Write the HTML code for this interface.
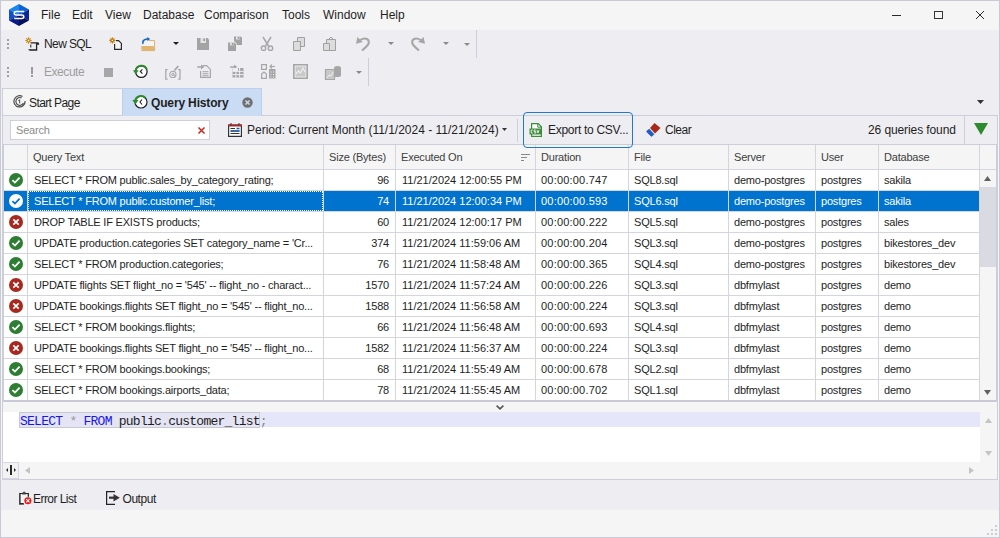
<!DOCTYPE html>
<html><head><meta charset="utf-8">
<style>
*{margin:0;padding:0;box-sizing:border-box}
html,body{width:1000px;height:538px;overflow:hidden;background:#f5f5f5}
body{position:relative;font-family:"Liberation Sans",sans-serif;font-size:12px;color:#1e1e1e}
.a{position:absolute}
.t{position:absolute;white-space:nowrap;line-height:14px}
svg{position:absolute;overflow:visible}
.g{font-size:11px;letter-spacing:-0.2px}
</style></head><body>
<!-- window border -->
<div class="a" style="left:0;top:0;width:1000px;height:538px;border:1px solid #c9cad6"></div>

<!-- MENU BAR -->
<div class="a" style="left:1px;top:1px;width:998px;height:29px;background:#f5f5f5"></div>
<svg style="left:9px;top:4px" width="20" height="22" viewBox="0 0 20 22">
  <path d="M10 0L20 5.5L10 11Z" fill="#0a64d6"/>
  <path d="M10 0L0 5.5L10 11Z" fill="#1a86ee"/>
  <path d="M0 5.5V16.5L10 11Z" fill="#1450c6"/>
  <path d="M20 5.5V16.5L10 11Z" fill="#0b2596"/>
  <path d="M0 16.5L10 22L10 11Z" fill="#0a1c86"/>
  <path d="M20 16.5L10 22L10 11Z" fill="#060f5c"/>
  <path d="M15.2 7.6H7.2Q5.2 7.6 5.2 9.3Q5.2 11 7.2 11H12.8Q14.8 11 14.8 12.7Q14.8 14.4 12.8 14.4H5.2" fill="none" stroke="#fff" stroke-width="1.5"/>
</svg>
<div class="t" style="left:41px;top:8px">File</div>
<div class="t" style="left:72px;top:8px">Edit</div>
<div class="t" style="left:105px;top:8px">View</div>
<div class="t" style="left:143px;top:8px">Database</div>
<div class="t" style="left:204px;top:8px">Comparison</div>
<div class="t" style="left:282px;top:8px">Tools</div>
<div class="t" style="left:323px;top:8px">Window</div>
<div class="t" style="left:380px;top:8px">Help</div>
<!-- window controls -->
<div class="a" style="left:892px;top:15px;width:9px;height:1px;background:#2a2a2a"></div>
<div class="a" style="left:934px;top:11px;width:9px;height:8px;border:1px solid #333"></div>
<svg style="left:976px;top:11px" width="8" height="8" viewBox="0 0 8 8"><path d="M0 0L8 8M8 0L0 8" stroke="#2a2a2a" stroke-width="1"/></svg>

<!-- TOOLBARS -->
<div class="a" style="left:1px;top:30px;width:998px;height:58px;background:#eeeef2"></div>

<!-- grips -->
<div class="a" style="left:7px;top:39px;width:2px;height:2px;background:#a0a0a8"></div>
<div class="a" style="left:7px;top:43px;width:2px;height:2px;background:#a0a0a8"></div>
<div class="a" style="left:7px;top:47px;width:2px;height:2px;background:#a0a0a8"></div>
<div class="a" style="left:7px;top:67px;width:2px;height:2px;background:#a0a0a8"></div>
<div class="a" style="left:7px;top:71px;width:2px;height:2px;background:#a0a0a8"></div>
<div class="a" style="left:7px;top:75px;width:2px;height:2px;background:#a0a0a8"></div>
<!-- New SQL icon -->
<svg style="left:25px;top:37px" width="15" height="15" viewBox="0 0 15 15">
  <g stroke="#d08a16" stroke-width="1.2"><path d="M3.5 0.3V6.7M0.3 3.5H6.7M1.3 1.3L5.7 5.7M5.7 1.3L1.3 5.7"/></g>
  <circle cx="3.5" cy="3.5" r="1.6" fill="#d08a16"/><circle cx="3.5" cy="3.5" r="0.7" fill="#fff"/>
  <path d="M5.8 5.9H12.5Q13.6 5.9 13.6 7.2H11.6V13H5" fill="none" stroke="#222" stroke-width="1.3"/>
  <path d="M5.5 12.9H4.6Q4 12.9 4 12.2" fill="none" stroke="#222" stroke-width="1.2"/>
  <path d="M5.8 7.5V10.5" stroke="#222" stroke-width="1"/>
</svg>
<div class="t" style="left:44px;top:37px;letter-spacing:-0.6px">New SQL</div>
<svg style="left:109px;top:37px" width="14" height="14" viewBox="0 0 14 14">
  <g stroke="#c97a10" stroke-width="1.1"><path d="M3.4 0.3V6.5M0.3 3.4H6.5M1.3 1.3L5.5 5.5M5.5 1.3L1.3 5.5"/></g>
  <circle cx="3.4" cy="3.4" r="1.6" fill="#c97a10"/><circle cx="3.4" cy="3.4" r="0.7" fill="#fff"/>
  <path d="M7 3.6H9.6L12.4 6.4V12.4H5.6V7" fill="#f4f4f4" stroke="#2a2a2a" stroke-width="1.2"/>
</svg>
<!-- open folder -->
<svg style="left:141px;top:37px" width="15" height="15" viewBox="0 0 15 15">
  <path d="M7.5 3.6H13.6V13.6H0.8V9.5" fill="#f4f4f4" stroke="#dcb070" stroke-width="1"/>
  <path d="M0.5 9H12.5L14 13.8H1.8Z" fill="#e0b570"/>
  <path d="M2.2 6.8Q1 4.8 3 3.2Q4.5 2 7 2" fill="none" stroke="#1565c0" stroke-width="1.5"/>
  <path d="M6.3 0L9.2 2L6.3 4Z" fill="#1565c0"/>
</svg>
<svg style="left:173px;top:42px" width="6" height="3" viewBox="0 0 6 3"><path d="M0 0H6L3 3Z" fill="#1e1e1e"/></svg>
<!-- save -->
<svg style="left:197px;top:38px" width="12" height="12" viewBox="0 0 12 12">
  <path d="M0 0H10.5L12 1.5V12H0Z" fill="#a3a3a3"/>
  <path d="M3.5 0H9V5H3.5Z" fill="#e4e4e4"/><path d="M6.3 0.5H8V3H6.3Z" fill="#9a9a9a"/>
</svg>
<svg style="left:228px;top:36px" width="14" height="15" viewBox="0 0 14 15">
  <path d="M6 0.5H12.7L14 1.8V9H6Z" fill="#a3a3a3"/><path d="M8 0.5H11.5V3.5H8Z" fill="#e4e4e4"/><path d="M9.8 1H11V3H9.8Z" fill="#9a9a9a"/>
  <path d="M-0.2 5.6H6.8L8.6 7.4V15H-0.2Z" fill="#eeeef2"/>
  <path d="M0 6.4H6.5L8 7.9V15H0Z" fill="#a3a3a3"/><path d="M2 6.4H5.5V9.4H2Z" fill="#e4e4e4"/><path d="M3.8 6.9H5V8.9H3.8Z" fill="#9a9a9a"/>
</svg>
<!-- cut -->
<svg style="left:260px;top:37px" width="14" height="14" viewBox="0 0 14 14">
  <path d="M3 0L8.5 9M11 0L5.5 9" stroke="#a6a6a6" stroke-width="1.5"/>
  <circle cx="3.5" cy="11.2" r="2.2" fill="none" stroke="#a6a6a6" stroke-width="1.4"/>
  <circle cx="10.5" cy="11.2" r="2.2" fill="none" stroke="#a6a6a6" stroke-width="1.4"/>
</svg>
<!-- copy -->
<svg style="left:293px;top:37px" width="13" height="14" viewBox="0 0 13 14">
  <path d="M4.5 4.5V0.5H11.5V9.5H7.5" fill="#dcdcdc" stroke="#a0a0a0" stroke-width="1"/>
  <path d="M0.5 4.5H7.5V13.5H0.5Z" fill="#dcdcdc" stroke="#a0a0a0" stroke-width="1"/>
</svg>
<!-- paste -->
<svg style="left:323px;top:36px" width="14" height="15" viewBox="0 0 14 15">
  <path d="M3.5 7.5V3.5H12.5V14.5H6.5" fill="#dcdcdc" stroke="#a0a0a0" stroke-width="1"/>
  <path d="M5.5 3.5L8 1L10.5 3.5Z" fill="none" stroke="#a0a0a0" stroke-width="1"/>
  <path d="M0.5 7.5H6.5V14.5H0.5Z" fill="#dcdcdc" stroke="#a0a0a0" stroke-width="1"/>
</svg>
<!-- undo -->
<svg style="left:356px;top:37px" width="14" height="14" viewBox="0 0 14 14">
  <path d="M4.2 3Q8 0.8 11 2Q13.2 3.2 12.8 6Q12.5 8 6 13.6" fill="none" stroke="#a6a6a6" stroke-width="2"/>
  <path d="M0 6.8L1.4 0L6.8 5Z" fill="#a6a6a6"/>
</svg>
<svg style="left:388px;top:42px" width="6" height="3" viewBox="0 0 6 3"><path d="M0 0H6L3 3Z" fill="#8a8a8a"/></svg>
<!-- redo -->
<svg style="left:411px;top:37px" width="14" height="14" viewBox="0 0 14 14">
  <path d="M9.8 3Q6 0.8 3 2Q0.8 3.2 1.2 6Q1.5 8 8 13.6" fill="none" stroke="#a6a6a6" stroke-width="2"/>
  <path d="M14 6.8L12.6 0L7.2 5Z" fill="#a6a6a6"/>
</svg>
<svg style="left:443px;top:42px" width="6" height="3" viewBox="0 0 6 3"><path d="M0 0H6L3 3Z" fill="#8a8a8a"/></svg>
<svg style="left:464px;top:43px" width="6" height="3" viewBox="0 0 6 3"><path d="M0 0H6L3 3Z" fill="#8a8a8a"/></svg>
<div class="a" style="left:476px;top:30px;width:1px;height:28px;background:#cccedb"></div>

<!-- toolbar 2 -->
<div class="a" style="left:31px;top:67px;width:2px;height:7px;background:#9a9a9a"></div>
<div class="a" style="left:31px;top:75px;width:2px;height:2px;background:#9a9a9a"></div>
<div class="t" style="left:44px;top:65px;color:#9d9d9d;letter-spacing:-0.45px">Execute</div>
<div class="a" style="left:104px;top:68px;width:9px;height:9px;background:#a6a6a6"></div>
<!-- history -->
<svg style="left:133px;top:64px" width="16" height="16" viewBox="0 0 16 16">
  <circle cx="8.3" cy="7.6" r="5.8" fill="#fff" stroke="#1e1e1e" stroke-width="1.2"/>
  <path d="M9.4 5.3L7.3 7.5L9.4 9.7" fill="none" stroke="#1e1e1e" stroke-width="1.1"/>
  <path d="M2.6 7A5.8 5.8 0 0 1 13.8 5.5" fill="none" stroke="#2e8a2e" stroke-width="2"/>
  <path d="M0 6.2H5.6L2.8 10.4Z" fill="#2e8a2e"/>
</svg>
<!-- email/at -->
<svg style="left:165px;top:65px" width="16" height="15" viewBox="0 0 16 15">
  <path d="M2.6 4.6H0.8V14.2H2.6M13.2 4.6H15V14.2H13.2" fill="none" stroke="#a6a6a6" stroke-width="1.2"/>
  <circle cx="7.9" cy="9.4" r="3.1" fill="none" stroke="#a6a6a6" stroke-width="1.1"/>
  <circle cx="7.9" cy="9.4" r="1.2" fill="none" stroke="#a6a6a6" stroke-width="1"/>
  <path d="M9.1 9.4V10.6Q9.1 11.5 10 11.5" fill="none" stroke="#a6a6a6" stroke-width="1"/>
  <path d="M9.5 5.5L13.3 1" stroke="#a6a6a6" stroke-width="1.7"/>
</svg>
<svg style="left:197px;top:64px" width="14" height="14" viewBox="0 0 14 14">
  <path d="M0.2 3H5" stroke="#a6a6a6" stroke-width="1.5"/><path d="M4 0.5L7.2 3L4 5.5Z" fill="#a6a6a6"/>
  <path d="M5.5 1.6H9.6L13.4 5.4V13.4H3.6V7" fill="none" stroke="#a6a6a6" stroke-width="1.2"/>
  <path d="M5.5 7.7H11.5M5.5 9.7H11.5M5.5 11.7H11.5" stroke="#a6a6a6" stroke-width="1"/>
</svg>
<svg style="left:230px;top:64px" width="14" height="14" viewBox="0 0 14 14">
  <path d="M0.2 3H5" stroke="#a6a6a6" stroke-width="1.5"/><path d="M4 0.5L7.2 3L4 5.5Z" fill="#a6a6a6"/>
  <path d="M2.5 4H13.5V13.5H2.5Z" fill="#a6a6a6"/>
  <path d="M2.5 4H8V7H2.5Z" fill="#eeeef2"/>
  <path d="M5.9 7V13.5M9.6 4V13.5M2.5 7.4H13.5M2.5 10.6H13.5" stroke="#eeeef2" stroke-width="1"/>
</svg>
<svg style="left:261px;top:64px" width="15" height="15" viewBox="0 0 15 15">
  <path d="M0.6 0.6H5.4V5.4H0.6Z" fill="none" stroke="#a6a6a6" stroke-width="1.2"/>
  <path d="M0.6 14.4H5.4V10L3 8L0.6 10Z" fill="none" stroke="#a6a6a6" stroke-width="1.2"/>
  <path d="M8 5H14.5V14.5H8Z" fill="#a6a6a6"/>
  <path d="M9.5 8H10.5M12 8H13M9.5 10.5H10.5M12 10.5H13M9.5 13H10.5M12 13H13" stroke="#eeeef2" stroke-width="1"/>
  <path d="M9 2.5H14M11 0.5L9 2.5L11 4.5" fill="none" stroke="#a6a6a6" stroke-width="1.1"/>
</svg>
<svg style="left:293px;top:64px" width="15" height="15" viewBox="0 0 15 15">
  <path d="M0.8 0.8H14.2V14.2H0.8Z" fill="none" stroke="#a6a6a6" stroke-width="1.6"/>
  <path d="M2.5 2.5H12.5V12.5H2.5Z" fill="#c8c8c8"/>
  <path d="M3 10L5.5 7L7.5 9L10 4L12 8" fill="none" stroke="#eeeef2" stroke-width="1.2"/>
</svg>
<svg style="left:325px;top:66px" width="16" height="14" viewBox="0 0 16 14">
  <path d="M9 2Q9 0 12.5 0Q16 0 16 2V9Q16 11 12.5 11Q9 11 9 9Z" fill="#a6a6a6"/>
  <path d="M0.5 3.5H9.5V13.5H0.5Z" fill="#c8c8c8" stroke="#a6a6a6" stroke-width="1.2"/>
  <path d="M2 12L4 9L6 10L8 6" fill="none" stroke="#eeeef2" stroke-width="1"/>
</svg>
<svg style="left:356px;top:71px" width="6" height="3" viewBox="0 0 6 3"><path d="M0 0H6L3 3Z" fill="#8a8a8a"/></svg>
<div class="a" style="left:368px;top:58px;width:1px;height:28px;background:#cccedb"></div>


<!-- TABS ROW -->
<div class="a" style="left:1px;top:88px;width:998px;height:27px;background:#eeeef2"></div>
<div class="a" style="left:2px;top:88px;width:121px;height:28px;background:#f5f5f5;border:1px solid #cccedb;border-bottom:none"></div>
<svg style="left:13px;top:95px" width="13" height="13" viewBox="0 0 13 13">
  <path d="M9.5 1.6A5.6 5.6 0 1 0 12.1 6" fill="none" stroke="#4a4a4a" stroke-width="1.2"/>
  <path d="M10.4 8A3.9 3.9 0 1 1 8.6 3" fill="none" stroke="#4a4a4a" stroke-width="1.1"/>
  <path d="M5.4 5.6L6.7 4.8V8.4" fill="none" stroke="#4a4a4a" stroke-width="1"/>
</svg>
<div class="t" style="left:29px;top:96px;color:#1e1e1e;letter-spacing:-0.6px">Start Page</div>
<div class="a" style="left:122px;top:88px;width:140px;height:28px;background:#c9dcf3;border:1px solid #bcd0ec;border-bottom:none"></div>
<svg style="left:132px;top:94px" width="16" height="16" viewBox="0 0 16 16">
  <circle cx="9" cy="8" r="6" fill="#fff" stroke="#1e1e1e" stroke-width="1.2"/>
  <path d="M10 5.5L8 8L10 10.5" fill="none" stroke="#1e1e1e" stroke-width="1.1"/>
  <path d="M3.1 7A6 6 0 0 1 13.5 4" fill="none" stroke="#2e8a2e" stroke-width="2"/>
  <path d="M0.3 6H6.5L3.4 10.5Z" fill="#2e8a2e"/>
</svg>
<div class="t" style="left:151px;top:96px;font-weight:bold;color:#1e1e1e;letter-spacing:-0.15px">Query History</div>
<svg style="left:242px;top:97px" width="11" height="11" viewBox="0 0 11 11">
  <circle cx="5.5" cy="5.5" r="5.2" fill="#707070"/>
  <path d="M3.5 3.5L7.5 7.5M7.5 3.5L3.5 7.5" stroke="#c9dcf3" stroke-width="1.4"/>
</svg>
<svg style="left:977px;top:100px" width="7" height="4" viewBox="0 0 7 4"><path d="M0 0H7L3.5 4Z" fill="#333"/></svg>

<!-- CONTENT PANEL -->
<div class="a" style="left:2px;top:115px;width:996px;height:365px;background:#eeeef2;border:1px solid #cccedb"></div>
<div class="a" style="left:123px;top:115px;width:138px;height:1px;background:#c9dcf3"></div>
<!-- filter bar -->
<div class="a" style="left:10px;top:120px;width:200px;height:20px;background:#fff;border:1px solid #cfd0da"></div>
<div class="t" style="left:16px;top:123px;color:#8b8b8b;font-size:11px;letter-spacing:-0.2px">Search</div>
<svg style="left:198px;top:127px" width="7" height="7" viewBox="0 0 7 7"><path d="M0.5 0.5L6.5 6.5M6.5 0.5L0.5 6.5" stroke="#c42b1c" stroke-width="1.5"/></svg>
<svg style="left:228px;top:123px" width="14" height="14" viewBox="0 0 14 14">
  <path d="M0.6 2.1H13.4V13.4H0.6Z" fill="#fff" stroke="#333" stroke-width="1.2"/>
  <path d="M0 1.5H14V3.5H0Z" fill="#a52a2a"/>
  <path d="M3 0V2M11 0V2" stroke="#333" stroke-width="1"/>
  <path d="M2.5 5.5H7M2.5 8H11.5M2.5 10.5H11.5" stroke="#333" stroke-width="1.2"/>
  <path d="M8.5 5.5H11.5M2.5 8H11.5" stroke="#1c5cb0" stroke-width="1.4"/>
</svg>
<div class="t" style="left:247px;top:123px;color:#1e1e1e">Period: Current Month (11/1/2024 - 11/21/2024)</div>
<svg style="left:502px;top:128px" width="5" height="3" viewBox="0 0 5 3"><path d="M0 0H5L2.5 3Z" fill="#333"/></svg>
<div class="a" style="left:517px;top:119px;width:1px;height:23px;background:#cccedb"></div>
<div class="a" style="left:523px;top:112px;width:110px;height:36px;border:1px solid #1f78d1;border-radius:4px;z-index:5"></div>
<svg style="left:529px;top:123px" width="14" height="14" viewBox="0 0 14 14">
  <path d="M2.6 0.6H9.2L12.4 3.8V13.4H2.6Z" fill="#fff" stroke="#3c8c3c" stroke-width="1.2"/>
  <path d="M8.8 0.6V4.2H12.4" fill="none" stroke="#3c8c3c" stroke-width="1"/>
  <path d="M0.5 5.5H13V11.5H0.5Z" fill="#3c8c3c"/>
  <path d="M3.8 7H2.2V10H3.8M6.8 7H5V8.5H6.8V10H5M8 7L9 10L10 7" fill="none" stroke="#fff" stroke-width="0.8"/>
</svg>
<div class="t" style="left:548px;top:123px;color:#1e1e1e;letter-spacing:-0.29px">Export to CSV...</div>
<svg style="left:646px;top:123px" width="15" height="14" viewBox="0 0 15 14">
  <path d="M8.5 0L14.5 5L9 10.5L4 5Z" fill="#a8281a"/>
  <path d="M3.3 5.8L8.3 11.2L6.2 13.3Q5.5 14 4.8 13.3L0.7 9.2Q0 8.5 0.7 7.8Z" fill="#1f5fc0"/>
</svg>
<div class="t" style="left:665px;top:123px;color:#1e1e1e;letter-spacing:-0.5px">Clear</div>
<div class="t" style="left:868px;top:123px;color:#1e1e1e;letter-spacing:-0.1px">26 queries found</div>
<div class="a" style="left:964px;top:116px;width:1px;height:28px;background:#cccedb"></div>
<svg style="left:974px;top:123px" width="14" height="12" viewBox="0 0 14 12"><path d="M0 0H14L7 12Z" fill="#2d8a2d"/></svg>

<!-- GRID -->
<div class="a" style="left:3px;top:144px;width:994px;height:258px;background:#fff;border:1px solid #cccedb;border-bottom:2px solid #c8cad6"></div>
<div class="a" style="left:4px;top:145px;width:992px;height:25px;background:#f5f5f5;border-bottom:1px solid #d4d5df"></div>
<div class="t g" style="left:33px;top:150px;color:#404040">Query Text</div>
<div class="t g" style="left:329px;top:150px;color:#404040">Size (Bytes)</div>
<div class="t g" style="left:401px;top:150px;color:#404040">Executed On</div>
<div class="t g" style="left:541px;top:150px;color:#404040">Duration</div>
<div class="t g" style="left:634px;top:150px;color:#404040">File</div>
<div class="t g" style="left:734px;top:150px;color:#404040">Server</div>
<div class="t g" style="left:821px;top:150px;color:#404040">User</div>
<div class="t g" style="left:884px;top:150px;color:#404040">Database</div>
<svg style="left:521px;top:154px" width="9" height="7" viewBox="0 0 9 7"><path d="M0 0.5H9M0 3.5H6M0 6.5H3" stroke="#888" stroke-width="1"/></svg>
<div class="a" style="left:4px;top:190px;width:975px;height:1px;background:#d4d5df"></div>
<svg style="left:9px;top:173px" width="14" height="14" viewBox="0 0 14 14"><circle cx="7" cy="7" r="7" fill="#2d7d32"/><path d="M3.4 7.2L5.9 9.6L10.6 4.7" fill="none" stroke="#fff" stroke-width="1.8"/></svg>
<div class="t g" style="left:34px;top:173px;color:#1e1e1e">SELECT * FROM public.sales_by_category_rating;</div>
<div class="t g" style="left:323px;width:66px;text-align:right;top:173px;color:#1e1e1e">96</div>
<div class="t g" style="left:402px;top:173px;color:#1e1e1e;letter-spacing:0;">11/21/2024 12:00:55 PM</div>
<div class="t g" style="left:541px;top:173px;color:#1e1e1e;letter-spacing:0.2px;">00:00:00.747</div>
<div class="t g" style="left:634px;top:173px;color:#1e1e1e;">SQL8.sql</div>
<div class="t g" style="left:734px;top:173px;color:#1e1e1e;">demo-postgres</div>
<div class="t g" style="left:821px;top:173px;color:#1e1e1e;">postgres</div>
<div class="t g" style="left:884px;top:173px;color:#1e1e1e;">sakila</div>
<div class="a" style="left:4px;top:191px;width:975px;height:20px;background:#0073cf"></div>
<div class="a" style="left:28px;top:191px;width:295px;height:20px;border:1px dotted #fff"></div>
<div class="a" style="left:4px;top:211px;width:975px;height:1px;background:#d4d5df"></div>
<svg style="left:9px;top:194px" width="14" height="14" viewBox="0 0 14 14"><circle cx="7" cy="7" r="7" fill="#fff"/><path d="M3.4 7.2L5.9 9.6L10.6 4.7" fill="none" stroke="#0073cf" stroke-width="1.8"/></svg>
<div class="t g" style="left:34px;top:194px;color:#fff">SELECT * FROM public.customer_list;</div>
<div class="t g" style="left:323px;width:66px;text-align:right;top:194px;color:#fff">74</div>
<div class="t g" style="left:402px;top:194px;color:#fff;letter-spacing:0;">11/21/2024 12:00:34 PM</div>
<div class="t g" style="left:541px;top:194px;color:#fff;letter-spacing:0.2px;">00:00:00.593</div>
<div class="t g" style="left:634px;top:194px;color:#fff;">SQL6.sql</div>
<div class="t g" style="left:734px;top:194px;color:#fff;">demo-postgres</div>
<div class="t g" style="left:821px;top:194px;color:#fff;">postgres</div>
<div class="t g" style="left:884px;top:194px;color:#fff;">sakila</div>
<div class="a" style="left:4px;top:232px;width:975px;height:1px;background:#d4d5df"></div>
<svg style="left:9px;top:215px" width="14" height="14" viewBox="0 0 14 14"><circle cx="7" cy="7" r="7" fill="#a8281f"/><path d="M4.3 4.3L9.7 9.7M9.7 4.3L4.3 9.7" fill="none" stroke="#fff" stroke-width="1.7"/></svg>
<div class="t g" style="left:34px;top:215px;color:#1e1e1e">DROP TABLE IF EXISTS products;</div>
<div class="t g" style="left:323px;width:66px;text-align:right;top:215px;color:#1e1e1e">60</div>
<div class="t g" style="left:402px;top:215px;color:#1e1e1e;letter-spacing:0;">11/21/2024 12:00:17 PM</div>
<div class="t g" style="left:541px;top:215px;color:#1e1e1e;letter-spacing:0.2px;">00:00:00.222</div>
<div class="t g" style="left:634px;top:215px;color:#1e1e1e;">SQL5.sql</div>
<div class="t g" style="left:734px;top:215px;color:#1e1e1e;">demo-postgres</div>
<div class="t g" style="left:821px;top:215px;color:#1e1e1e;">postgres</div>
<div class="t g" style="left:884px;top:215px;color:#1e1e1e;">sales</div>
<div class="a" style="left:4px;top:253px;width:975px;height:1px;background:#d4d5df"></div>
<svg style="left:9px;top:236px" width="14" height="14" viewBox="0 0 14 14"><circle cx="7" cy="7" r="7" fill="#2d7d32"/><path d="M3.4 7.2L5.9 9.6L10.6 4.7" fill="none" stroke="#fff" stroke-width="1.8"/></svg>
<div class="t g" style="left:34px;top:236px;color:#1e1e1e">UPDATE production.categories SET category_name = 'Cr...</div>
<div class="t g" style="left:323px;width:66px;text-align:right;top:236px;color:#1e1e1e">374</div>
<div class="t g" style="left:402px;top:236px;color:#1e1e1e;letter-spacing:0;">11/21/2024 11:59:06 AM</div>
<div class="t g" style="left:541px;top:236px;color:#1e1e1e;letter-spacing:0.2px;">00:00:00.204</div>
<div class="t g" style="left:634px;top:236px;color:#1e1e1e;">SQL3.sql</div>
<div class="t g" style="left:734px;top:236px;color:#1e1e1e;">demo-postgres</div>
<div class="t g" style="left:821px;top:236px;color:#1e1e1e;">postgres</div>
<div class="t g" style="left:884px;top:236px;color:#1e1e1e;">bikestores_dev</div>
<div class="a" style="left:4px;top:274px;width:975px;height:1px;background:#d4d5df"></div>
<svg style="left:9px;top:257px" width="14" height="14" viewBox="0 0 14 14"><circle cx="7" cy="7" r="7" fill="#2d7d32"/><path d="M3.4 7.2L5.9 9.6L10.6 4.7" fill="none" stroke="#fff" stroke-width="1.8"/></svg>
<div class="t g" style="left:34px;top:257px;color:#1e1e1e">SELECT * FROM production.categories;</div>
<div class="t g" style="left:323px;width:66px;text-align:right;top:257px;color:#1e1e1e">76</div>
<div class="t g" style="left:402px;top:257px;color:#1e1e1e;letter-spacing:0;">11/21/2024 11:58:48 AM</div>
<div class="t g" style="left:541px;top:257px;color:#1e1e1e;letter-spacing:0.2px;">00:00:00.365</div>
<div class="t g" style="left:634px;top:257px;color:#1e1e1e;">SQL4.sql</div>
<div class="t g" style="left:734px;top:257px;color:#1e1e1e;">demo-postgres</div>
<div class="t g" style="left:821px;top:257px;color:#1e1e1e;">postgres</div>
<div class="t g" style="left:884px;top:257px;color:#1e1e1e;">bikestores_dev</div>
<div class="a" style="left:4px;top:295px;width:975px;height:1px;background:#d4d5df"></div>
<svg style="left:9px;top:278px" width="14" height="14" viewBox="0 0 14 14"><circle cx="7" cy="7" r="7" fill="#a8281f"/><path d="M4.3 4.3L9.7 9.7M9.7 4.3L4.3 9.7" fill="none" stroke="#fff" stroke-width="1.7"/></svg>
<div class="t g" style="left:34px;top:278px;color:#1e1e1e">UPDATE flights SET flight_no = '545' -- flight_no - charact...</div>
<div class="t g" style="left:323px;width:66px;text-align:right;top:278px;color:#1e1e1e">1570</div>
<div class="t g" style="left:402px;top:278px;color:#1e1e1e;letter-spacing:0;">11/21/2024 11:57:24 AM</div>
<div class="t g" style="left:541px;top:278px;color:#1e1e1e;letter-spacing:0.2px;">00:00:00.226</div>
<div class="t g" style="left:634px;top:278px;color:#1e1e1e;">SQL3.sql</div>
<div class="t g" style="left:734px;top:278px;color:#1e1e1e;">dbfmylast</div>
<div class="t g" style="left:821px;top:278px;color:#1e1e1e;">postgres</div>
<div class="t g" style="left:884px;top:278px;color:#1e1e1e;">demo</div>
<div class="a" style="left:4px;top:316px;width:975px;height:1px;background:#d4d5df"></div>
<svg style="left:9px;top:299px" width="14" height="14" viewBox="0 0 14 14"><circle cx="7" cy="7" r="7" fill="#a8281f"/><path d="M4.3 4.3L9.7 9.7M9.7 4.3L4.3 9.7" fill="none" stroke="#fff" stroke-width="1.7"/></svg>
<div class="t g" style="left:34px;top:299px;color:#1e1e1e">UPDATE bookings.flights SET flight_no = '545' -- flight_no...</div>
<div class="t g" style="left:323px;width:66px;text-align:right;top:299px;color:#1e1e1e">1588</div>
<div class="t g" style="left:402px;top:299px;color:#1e1e1e;letter-spacing:0;">11/21/2024 11:56:58 AM</div>
<div class="t g" style="left:541px;top:299px;color:#1e1e1e;letter-spacing:0.2px;">00:00:00.224</div>
<div class="t g" style="left:634px;top:299px;color:#1e1e1e;">SQL3.sql</div>
<div class="t g" style="left:734px;top:299px;color:#1e1e1e;">dbfmylast</div>
<div class="t g" style="left:821px;top:299px;color:#1e1e1e;">postgres</div>
<div class="t g" style="left:884px;top:299px;color:#1e1e1e;">demo</div>
<div class="a" style="left:4px;top:337px;width:975px;height:1px;background:#d4d5df"></div>
<svg style="left:9px;top:320px" width="14" height="14" viewBox="0 0 14 14"><circle cx="7" cy="7" r="7" fill="#2d7d32"/><path d="M3.4 7.2L5.9 9.6L10.6 4.7" fill="none" stroke="#fff" stroke-width="1.8"/></svg>
<div class="t g" style="left:34px;top:320px;color:#1e1e1e">SELECT * FROM bookings.flights;</div>
<div class="t g" style="left:323px;width:66px;text-align:right;top:320px;color:#1e1e1e">66</div>
<div class="t g" style="left:402px;top:320px;color:#1e1e1e;letter-spacing:0;">11/21/2024 11:56:48 AM</div>
<div class="t g" style="left:541px;top:320px;color:#1e1e1e;letter-spacing:0.2px;">00:00:00.693</div>
<div class="t g" style="left:634px;top:320px;color:#1e1e1e;">SQL4.sql</div>
<div class="t g" style="left:734px;top:320px;color:#1e1e1e;">dbfmylast</div>
<div class="t g" style="left:821px;top:320px;color:#1e1e1e;">postgres</div>
<div class="t g" style="left:884px;top:320px;color:#1e1e1e;">demo</div>
<div class="a" style="left:4px;top:358px;width:975px;height:1px;background:#d4d5df"></div>
<svg style="left:9px;top:341px" width="14" height="14" viewBox="0 0 14 14"><circle cx="7" cy="7" r="7" fill="#a8281f"/><path d="M4.3 4.3L9.7 9.7M9.7 4.3L4.3 9.7" fill="none" stroke="#fff" stroke-width="1.7"/></svg>
<div class="t g" style="left:34px;top:341px;color:#1e1e1e">UPDATE bookings.flights SET flight_no = '545' -- flight_no...</div>
<div class="t g" style="left:323px;width:66px;text-align:right;top:341px;color:#1e1e1e">1582</div>
<div class="t g" style="left:402px;top:341px;color:#1e1e1e;letter-spacing:0;">11/21/2024 11:56:37 AM</div>
<div class="t g" style="left:541px;top:341px;color:#1e1e1e;letter-spacing:0.2px;">00:00:00.224</div>
<div class="t g" style="left:634px;top:341px;color:#1e1e1e;">SQL3.sql</div>
<div class="t g" style="left:734px;top:341px;color:#1e1e1e;">dbfmylast</div>
<div class="t g" style="left:821px;top:341px;color:#1e1e1e;">postgres</div>
<div class="t g" style="left:884px;top:341px;color:#1e1e1e;">demo</div>
<div class="a" style="left:4px;top:379px;width:975px;height:1px;background:#d4d5df"></div>
<svg style="left:9px;top:362px" width="14" height="14" viewBox="0 0 14 14"><circle cx="7" cy="7" r="7" fill="#2d7d32"/><path d="M3.4 7.2L5.9 9.6L10.6 4.7" fill="none" stroke="#fff" stroke-width="1.8"/></svg>
<div class="t g" style="left:34px;top:362px;color:#1e1e1e">SELECT * FROM bookings.bookings;</div>
<div class="t g" style="left:323px;width:66px;text-align:right;top:362px;color:#1e1e1e">68</div>
<div class="t g" style="left:402px;top:362px;color:#1e1e1e;letter-spacing:0;">11/21/2024 11:55:49 AM</div>
<div class="t g" style="left:541px;top:362px;color:#1e1e1e;letter-spacing:0.2px;">00:00:00.678</div>
<div class="t g" style="left:634px;top:362px;color:#1e1e1e;">SQL2.sql</div>
<div class="t g" style="left:734px;top:362px;color:#1e1e1e;">dbfmylast</div>
<div class="t g" style="left:821px;top:362px;color:#1e1e1e;">postgres</div>
<div class="t g" style="left:884px;top:362px;color:#1e1e1e;">demo</div>
<svg style="left:9px;top:383px" width="14" height="14" viewBox="0 0 14 14"><circle cx="7" cy="7" r="7" fill="#2d7d32"/><path d="M3.4 7.2L5.9 9.6L10.6 4.7" fill="none" stroke="#fff" stroke-width="1.8"/></svg>
<div class="t g" style="left:34px;top:383px;color:#1e1e1e">SELECT * FROM bookings.airports_data;</div>
<div class="t g" style="left:323px;width:66px;text-align:right;top:383px;color:#1e1e1e">78</div>
<div class="t g" style="left:402px;top:383px;color:#1e1e1e;letter-spacing:0;">11/21/2024 11:55:45 AM</div>
<div class="t g" style="left:541px;top:383px;color:#1e1e1e;letter-spacing:0.2px;">00:00:00.702</div>
<div class="t g" style="left:634px;top:383px;color:#1e1e1e;">SQL1.sql</div>
<div class="t g" style="left:734px;top:383px;color:#1e1e1e;">dbfmylast</div>
<div class="t g" style="left:821px;top:383px;color:#1e1e1e;">postgres</div>
<div class="t g" style="left:884px;top:383px;color:#1e1e1e;">demo</div>
<div class="a" style="left:27px;top:145px;width:1px;height:255px;background:#d4d5df"></div>
<div class="a" style="left:323px;top:145px;width:1px;height:255px;background:#d4d5df"></div>
<div class="a" style="left:395px;top:145px;width:1px;height:255px;background:#d4d5df"></div>
<div class="a" style="left:535px;top:145px;width:1px;height:255px;background:#d4d5df"></div>
<div class="a" style="left:628px;top:145px;width:1px;height:255px;background:#d4d5df"></div>
<div class="a" style="left:728px;top:145px;width:1px;height:255px;background:#d4d5df"></div>
<div class="a" style="left:815px;top:145px;width:1px;height:255px;background:#d4d5df"></div>
<div class="a" style="left:878px;top:145px;width:1px;height:255px;background:#d4d5df"></div>
<div class="a" style="left:979px;top:145px;width:1px;height:255px;background:#d4d5df"></div>
<div class="a" style="left:980px;top:170px;width:16px;height:230px;background:#f5f5f5"></div>
<div class="a" style="left:980px;top:187px;width:16px;height:80px;background:#dadae2"></div>
<svg style="left:984px;top:176px" width="7" height="5" viewBox="0 0 7 5"><path d="M0 5H7L3.5 0Z" fill="#606060"/></svg>
<svg style="left:984px;top:390px" width="7" height="5" viewBox="0 0 7 5"><path d="M0 0H7L3.5 5Z" fill="#606060"/></svg>
<div class="a" style="left:3px;top:402px;width:994px;height:10px;background:#f5f5f5"></div>
<svg style="left:496px;top:405px" width="8" height="5" viewBox="0 0 8 5"><path d="M0.6 0.6L4 3.8L7.4 0.6" fill="none" stroke="#555" stroke-width="1.6"/></svg>
<div class="a" style="left:3px;top:412px;width:977px;height:50px;background:#fff"></div>
<div class="a" style="left:19px;top:412px;width:961px;height:15px;background:#e6e6fa"></div>
<div class="a" style="left:19px;top:412px;width:241px;height:16px;border:1px solid #c8c8d0;background:#e4e4f4"></div>
<div class="t" style="left:20px;top:414px;font-family:'Liberation Mono',monospace;font-size:13px;letter-spacing:-0.75px;line-height:16px;color:#1e1e1e"><span style="color:#1515ee">SELECT</span> <span style="color:#9a9a9a">*</span> <span style="color:#1515ee">FROM</span> public<span style="color:#777">.</span>customer_list<span style="color:#888">;</span></div>
<div class="a" style="left:980px;top:412px;width:17px;height:50px;background:#f5f5f5"></div>
<svg style="left:985px;top:418px" width="7" height="5" viewBox="0 0 7 5"><path d="M0 5H7L3.5 0Z" fill="#c4c4c4"/></svg>
<svg style="left:985px;top:451px" width="7" height="5" viewBox="0 0 7 5"><path d="M0 0H7L3.5 5Z" fill="#c4c4c4"/></svg>
<div class="a" style="left:3px;top:462px;width:994px;height:17px;background:#f5f5f5"></div>
<div class="a" style="left:2px;top:462px;width:17px;height:17px;border:1px solid #d5d6df;background:#f2f2f2"></div>
<svg style="left:6px;top:465px" width="11" height="10" viewBox="0 0 11 10"><path d="M5 0V10" stroke="#2a2a2a" stroke-width="2"/><path d="M0 5L2 3V7Z M10 5L8 3V7Z" fill="#2a2a2a"/></svg>
<svg style="left:25px;top:467px" width="5" height="7" viewBox="0 0 5 7"><path d="M5 0V7L0 3.5Z" fill="#c4c4c4"/></svg>
<svg style="left:969px;top:467px" width="5" height="7" viewBox="0 0 5 7"><path d="M0 0V7L5 3.5Z" fill="#c4c4c4"/></svg>
<div class="a" style="left:1px;top:480px;width:998px;height:30px;background:#eeeef2"></div>
<svg style="left:19px;top:491px" width="14" height="15" viewBox="0 0 14 16"><path d="M4 2.6H0.6V14.4H5M7 2.6H9.4V6" fill="#f4f4f4" stroke="#222" stroke-width="1.2"/><path d="M0.6 2.6H9.4V14.4H0.6Z" fill="#f4f4f4"/><path d="M4.6 13.4H0.6V2.6H9.4V6" fill="none" stroke="#222" stroke-width="1.2"/><path d="M2.8 3.6Q2.8 1.6 4.5 0.7Q5 0.4 5.5 0.7Q7.2 1.6 7.2 3.6Z" fill="#444"/><circle cx="9" cy="10.4" r="3.8" fill="#e31b1b"/><path d="M7.3 8.7L10.7 12.1M10.7 8.7L7.3 12.1" stroke="#fff" stroke-width="1.1"/></svg>
<div class="t" style="left:33px;top:492px;color:#1e1e1e;letter-spacing:-0.55px">Error List</div>
<svg style="left:106px;top:491px" width="15" height="14" viewBox="0 0 15 14"><path d="M9 0.6H0.6V13.4H9" fill="none" stroke="#222" stroke-width="1.2"/><path d="M3 6.7H9" stroke="#333" stroke-width="2.2"/><path d="M7.5 3L13.8 6.7L7.5 10.4Z" fill="#333"/></svg>
<div class="t" style="left:122.5px;top:492px;color:#1e1e1e;letter-spacing:-0.45px">Output</div>
<div class="a" style="left:995px;top:525px;width:2px;height:2px;background:#ccccd6"></div>
<div class="a" style="left:991px;top:529px;width:2px;height:2px;background:#ccccd6"></div>
<div class="a" style="left:995px;top:529px;width:2px;height:2px;background:#ccccd6"></div>
<div class="a" style="left:987px;top:533px;width:2px;height:2px;background:#ccccd6"></div>
<div class="a" style="left:991px;top:533px;width:2px;height:2px;background:#ccccd6"></div>
<div class="a" style="left:995px;top:533px;width:2px;height:2px;background:#ccccd6"></div>
</body></html>
